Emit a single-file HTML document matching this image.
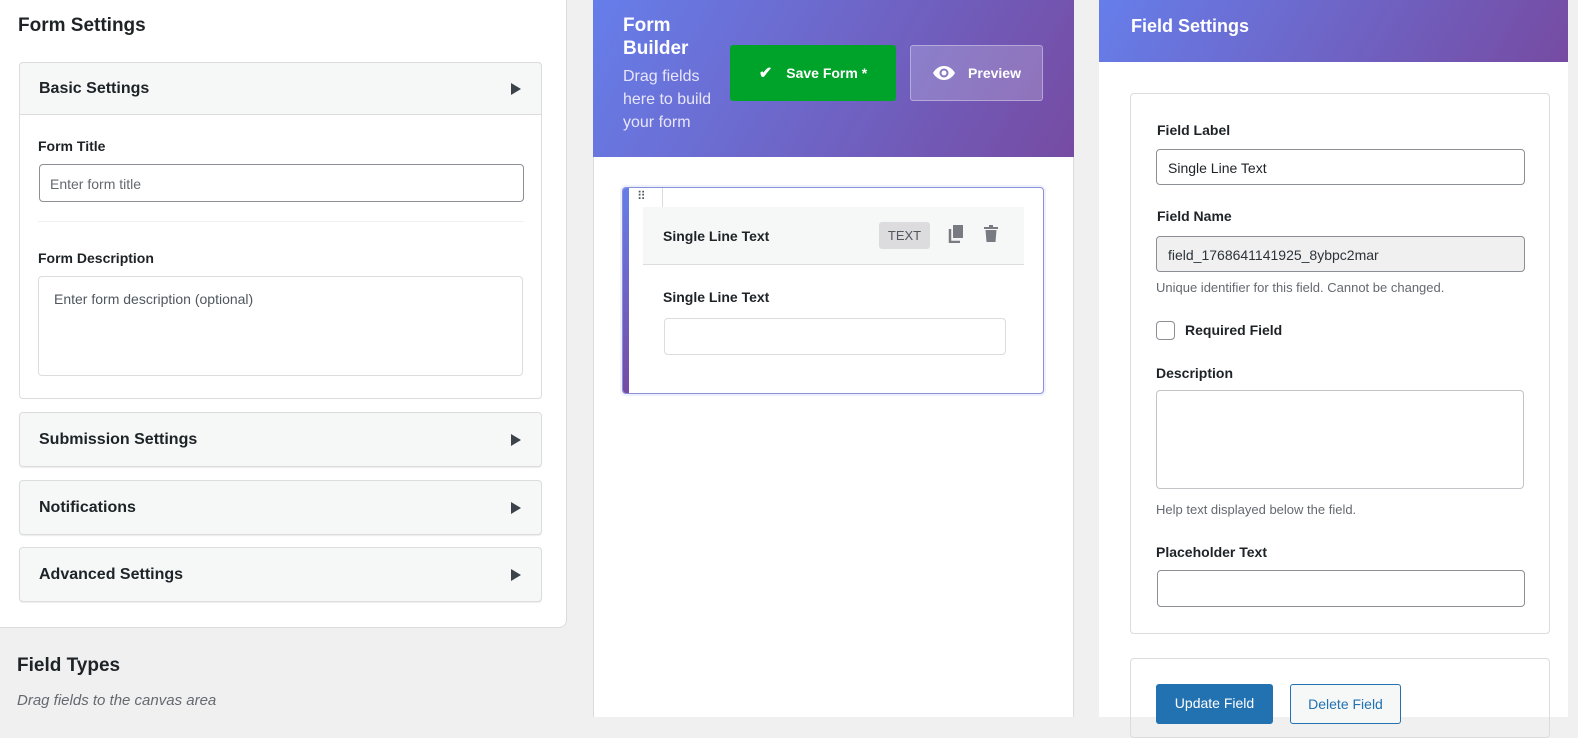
<!DOCTYPE html>
<html><head><meta charset="utf-8"><style>
*{box-sizing:border-box;margin:0;padding:0}
body{width:1578px;height:717px;overflow:hidden;background:#f0f0f1;font-family:"Liberation Sans",sans-serif;color:#1d2327;position:relative}
.a{position:absolute}
.grad{background:linear-gradient(120deg,#667eea 0%,#764ba2 100%)}
.lbl{font-size:14px;font-weight:bold;color:#1d2327}
.inp{border:1px solid #8c8f94;border-radius:4px;background:#fff}
.acc{left:19px;width:523px;background:#f6f7f7;border:1px solid #dcdcde;border-radius:4px;box-shadow:0 1px 1px rgba(0,0,0,.08)}
.acc span{position:absolute;left:19px;top:50%;transform:translateY(-50%);font-size:16px;font-weight:bold}
.acc i{position:absolute;right:20px;top:50%;transform:translateY(-50%);width:0;height:0;border-left:10px solid #3c434a;border-top:6px solid transparent;border-bottom:6px solid transparent}
.help{font-size:13px;color:#646970}
</style></head><body>
<!-- left panel -->
<div class="a" style="left:0;top:0;width:567px;height:628px;background:#fff;border-right:1px solid #dcdcde;border-bottom:1px solid #dcdcde;border-bottom-right-radius:8px"></div>
<div class="a" style="left:18px;top:15px;font-size:19px;font-weight:bold">Form Settings</div>
<div class="a" style="left:19px;top:62px;width:523px;height:337px;border:1px solid #dcdcde;border-radius:4px;background:#fff"></div>
<div class="a acc" style="top:62px;height:53px;box-shadow:none;border-radius:4px 4px 0 0"><span>Basic Settings</span><i></i></div>
<div class="a lbl" style="left:38px;top:138px">Form Title</div>
<div class="a inp" style="left:39px;top:164px;width:485px;height:38px"><span class="a" style="left:10px;top:11px;font-size:14px;color:#646970">Enter form title</span></div>
<div class="a" style="left:38px;top:221px;width:486px;height:1px;background:#f0f0f1"></div>
<div class="a lbl" style="left:38px;top:250px">Form Description</div>
<div class="a inp" style="left:38px;top:276px;width:485px;height:100px;border-color:#dcdcde"><span class="a" style="left:15px;top:14px;font-size:14px;color:#50575e">Enter form description (optional)</span></div>
<div class="a acc" style="top:412px;height:55px"><span>Submission Settings</span><i></i></div>
<div class="a acc" style="top:480px;height:55px"><span>Notifications</span><i></i></div>
<div class="a acc" style="top:547px;height:55px"><span>Advanced Settings</span><i></i></div>
<div class="a" style="left:17px;top:655px;font-size:19px;font-weight:bold">Field Types</div>
<div class="a" style="left:17px;top:692px;font-size:15px;font-style:italic;color:#646970">Drag fields to the canvas area</div>

<!-- middle -->
<div class="a" style="left:593px;top:0;width:481px;height:717px;background:#fff;border-left:1px solid #dcdcde;border-right:1px solid #dcdcde"></div>
<div class="a grad" style="left:593px;top:0;width:481px;height:157px"></div>
<div class="a" style="left:623px;top:14px;font-size:19px;font-weight:bold;color:#fff;line-height:23px">Form<br>Builder</div>
<div class="a" style="left:623px;top:65px;font-size:16px;color:#e8e6f8;line-height:23px">Drag fields<br>here to build<br>your form</div>
<div class="a" style="left:730px;top:45px;width:166px;height:56px;background:#00a32a;border-radius:3px;color:#fff;font-size:14px;font-weight:bold;display:flex;align-items:center;justify-content:center;gap:14px"><span style="font-size:16px">✔</span>Save Form *</div>
<div class="a" style="left:910px;top:45px;width:133px;height:56px;background:rgba(255,255,255,.2);border:1px solid rgba(255,255,255,.35);border-radius:3px;color:#fff;font-size:14px;font-weight:bold;display:flex;align-items:center;justify-content:center;gap:12px">
<svg width="24" height="16" viewBox="0 0 24 16"><path d="M1 8C4 3 8 1 12 1s8 2 11 7c-3 5-7 7-11 7S4 13 1 8z" fill="#fff"/><circle cx="12" cy="8" r="4.5" fill="#8a77c8"/><circle cx="12" cy="8" r="2.5" fill="#fff"/></svg>Preview</div>
<!-- field card -->
<div class="a" style="left:622px;top:187px;width:422px;height:207px;border:1px solid #8a90d8;border-radius:4px;background:#fff;box-shadow:0 0 0 2px #eef0fb;overflow:hidden">
<div class="a" style="left:0;top:0;width:6px;height:100%;background:linear-gradient(#667eea,#764ba2)"></div>
<div class="a" style="left:6px;top:0;width:34px;height:20px;border-right:1px solid #dcdcde;background:#fff"></div>
<div class="a" style="left:14px;top:6px;font-size:12px;color:#50575e;line-height:5px;letter-spacing:1px">⠿</div>
<div class="a" style="left:20px;top:19px;width:381px;height:58px;background:#f6f7f7;border-bottom:1px solid #dcdcde"></div>
<div class="a" style="left:40px;top:40px;font-size:14px;font-weight:bold">Single Line Text</div>
<div class="a" style="left:256px;top:34px;width:51px;height:27px;background:#dcdcde;border-radius:3px;font-size:13px;color:#50575e;text-align:center;line-height:27px">TEXT</div>
<svg class="a" style="left:325px;top:37px" width="16" height="18" viewBox="0 0 16 18"><rect x="5" y="0" width="10" height="13" fill="#787c82"/><path d="M2 4v13h10" stroke="#787c82" stroke-width="2.5" fill="none"/></svg>
<svg class="a" style="left:361px;top:37px" width="14" height="17" viewBox="0 0 14 17"><rect x="0" y="2" width="14" height="2" fill="#787c82"/><rect x="5" y="0" width="4" height="2" fill="#787c82"/><path d="M1.5 5h11l-1 12h-9z" fill="#787c82"/></svg>
<div class="a" style="left:40px;top:101px;font-size:14px;font-weight:bold">Single Line Text</div>
<div class="a" style="left:41px;top:130px;width:342px;height:37px;border:1px solid #dcdcde;border-radius:4px"></div>
</div>

<!-- right -->
<div class="a" style="left:1099px;top:0;width:469px;height:717px;background:#fff"></div>
<div class="a grad" style="left:1099px;top:0;width:469px;height:62px"></div>
<div class="a" style="left:1131px;top:16px;font-size:18px;font-weight:bold;color:#fff">Field Settings</div>
<div class="a" style="left:1130px;top:93px;width:420px;height:541px;border:1px solid #dcdcde;border-radius:4px"></div>
<div class="a lbl" style="left:1157px;top:122px">Field Label</div>
<div class="a inp" style="left:1156px;top:149px;width:369px;height:36px"><span class="a" style="left:11px;top:10px;font-size:14px">Single Line Text</span></div>
<div class="a lbl" style="left:1157px;top:208px">Field Name</div>
<div class="a inp" style="left:1156px;top:236px;width:369px;height:36px;background:#f0f0f1"><span class="a" style="left:11px;top:10px;font-size:14px;color:#2c3338">field_1768641141925_8ybpc2mar</span></div>
<div class="a help" style="left:1156px;top:280px">Unique identifier for this field. Cannot be changed.</div>
<div class="a" style="left:1156px;top:321px;width:19px;height:19px;border:1px solid #8c8f94;border-radius:4px"></div>
<div class="a lbl" style="left:1185px;top:322px">Required Field</div>
<div class="a lbl" style="left:1156px;top:365px">Description</div>
<div class="a inp" style="left:1156px;top:390px;width:368px;height:99px;border-color:#c3c4c7"></div>
<div class="a help" style="left:1156px;top:502px">Help text displayed below the field.</div>
<div class="a lbl" style="left:1156px;top:544px">Placeholder Text</div>
<div class="a inp" style="left:1157px;top:570px;width:368px;height:37px"></div>
<div class="a" style="left:1130px;top:658px;width:420px;height:80px;border:1px solid #dcdcde;border-radius:4px"></div>
<div class="a" style="left:1156px;top:684px;width:117px;height:40px;background:#2271b1;border-radius:3px;color:#fff;font-size:14px;text-align:center;line-height:38px">Update Field</div>
<div class="a" style="left:1290px;top:684px;width:111px;height:40px;background:#f6f7f7;border:1px solid #2271b1;border-radius:3px;color:#2271b1;font-size:14px;text-align:center;line-height:38px">Delete Field</div>
</body></html>
